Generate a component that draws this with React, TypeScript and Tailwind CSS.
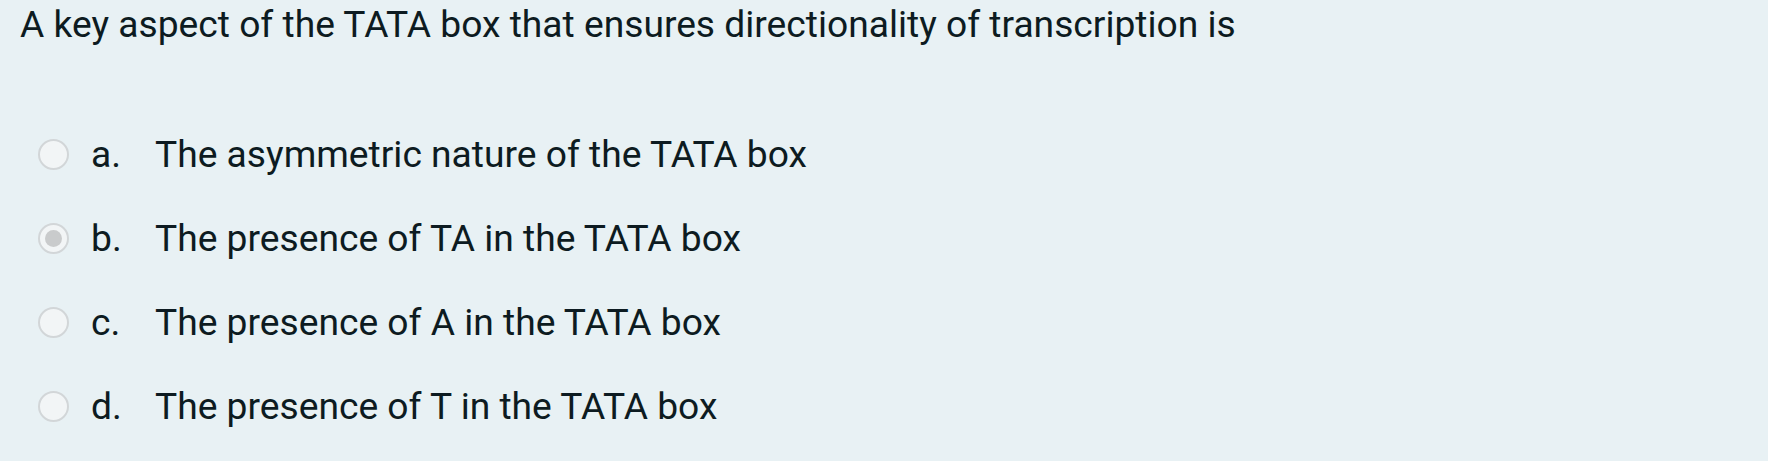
import React from 'react';

const options = [
  { letter: 'a.', text: 'The asymmetric nature of the TATA box', checked: false },
  { letter: 'b.', text: 'The presence of TA in the TATA box', checked: true },
  { letter: 'c.', text: 'The presence of A in the TATA box', checked: false },
  { letter: 'd.', text: 'The presence of T in the TATA box', checked: false },
];

function Radio({ checked }: { checked: boolean }) {
  return (
    <span className="flex h-[31px] w-[31px] shrink-0 items-center justify-center rounded-full border-2 border-[#d2d6d8] bg-[#f2f5f6]">
      {checked && <span className="h-[17px] w-[17px] rounded-full bg-[#c9cbcc]" />}
    </span>
  );
}

export default function App() {
  return (
    <div
      className="h-[461px] w-full bg-[#e8f1f4] text-[#0d1b21]"
      style={{ fontFamily: 'Roboto, "Noto Sans", sans-serif' }}
    >
      <h1 className="pl-[20px] pt-[2px] text-[37.2px] leading-[44px] font-normal">
        A key aspect of the TATA box that ensures directionality of transcription is
      </h1>

      <div className="mt-[66px] flex flex-col">
        {options.map((o) => (
          <label key={o.letter} className="flex h-[84px] items-center pl-[38px]">
            <Radio checked={o.checked} />
            <span className="ml-[22px] w-[64px] text-[37.2px] leading-[44px]">{o.letter}</span>
            <span className="text-[37.2px] leading-[44px]">{o.text}</span>
          </label>
        ))}
      </div>
    </div>
  );
}
